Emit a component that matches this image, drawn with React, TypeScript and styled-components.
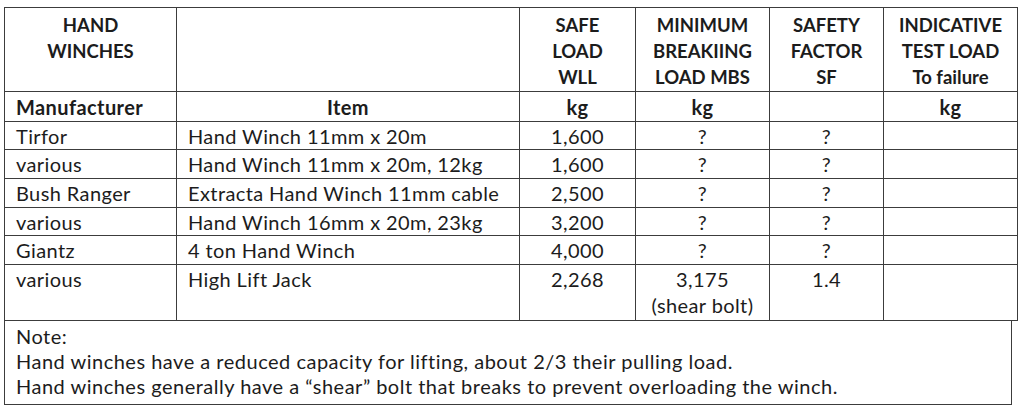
import styled, { createGlobalStyle } from "styled-components";

const GlobalStyle = createGlobalStyle`
  html, body {
    margin: 0;
    padding: 0;
    background: #ffffff;
  }
  body {
    font-family: Lato, "Open Sans", "Liberation Sans", sans-serif;
    color: #1c1c1c;
  }
`;

const Page = styled.div`
  padding: 7px 0 0 4px;
`;

const Table = styled.table`
  border-collapse: collapse;
  table-layout: fixed;
  width: 1013px;
  font-size: 20px;
  letter-spacing: 0.4px;
`;

const HeadRow = styled.tr`
  height: 84px;
`;

const UnitRow = styled.tr`
  height: 30px;
`;

const BodyRow = styled.tr<{ $height: number }>`
  height: ${(p) => p.$height}px;
`;

const HeadCell = styled.th`
  border: 1px solid #3c3c3c;
  vertical-align: top;
  text-align: center;
  font-size: 18.5px;
  letter-spacing: 0;
  font-weight: 700;
  line-height: 26px;
  padding: 4px 4px 0;
`;

const UnitCell = styled.th<{ $align?: "left" | "center" }>`
  border: 1px solid #3c3c3c;
  text-align: ${(p) => p.$align ?? "center"};
  font-weight: 700;
  line-height: 26px;
  padding: 0 11px;
`;

const Cell = styled.td<{ $align?: "left" | "center" }>`
  border: 1px solid #3c3c3c;
  vertical-align: top;
  text-align: ${(p) => p.$align ?? "center"};
  line-height: 26px;
  padding: 1px 11px 0;
  white-space: nowrap;
`;

const NoteBox = styled.div`
  box-sizing: border-box;
  width: 1008px;
  height: 85px;
  margin-top: -1px;
  border: 1px solid #3c3c3c;
  padding: 3px 11px 0;
  font-size: 20px;
  letter-spacing: 0.5px;
  line-height: 25px;
`;

const NoteLine = styled.p`
  margin: 0;
  white-space: nowrap;
`;

interface IWinch {
  maker: string;
  item: string;
  wll: string;
  mbs: string[];
  sf: string;
  height: number;
}

const winches: IWinch[] = [
  { maker: "Tirfor", item: "Hand Winch 11mm x 20m", wll: "1,600", mbs: ["?"], sf: "?", height: 28 },
  { maker: "various", item: "Hand Winch 11mm x 20m, 12kg", wll: "1,600", mbs: ["?"], sf: "?", height: 29 },
  { maker: "Bush Ranger", item: "Extracta Hand Winch 11mm cable", wll: "2,500", mbs: ["?"], sf: "?", height: 29 },
  { maker: "various", item: "Hand Winch 16mm x 20m, 23kg", wll: "3,200", mbs: ["?"], sf: "?", height: 28 },
  { maker: "Giantz", item: "4 ton Hand Winch", wll: "4,000", mbs: ["?"], sf: "?", height: 29 },
  { maker: "various", item: "High Lift Jack", wll: "2,268", mbs: ["3,175", "(shear bolt)"], sf: "1.4", height: 56 },
];

function App() {
  return (
    <>
      <GlobalStyle />
      <Page>
        <Table>
          <colgroup>
            <col style={{ width: 172 }} />
            <col style={{ width: 343 }} />
            <col style={{ width: 116 }} />
            <col style={{ width: 134 }} />
            <col style={{ width: 114 }} />
            <col style={{ width: 134 }} />
          </colgroup>
          <thead>
            <HeadRow>
              <HeadCell>
                HAND
                <br />
                WINCHES
              </HeadCell>
              <HeadCell />
              <HeadCell>
                SAFE
                <br />
                LOAD
                <br />
                WLL
              </HeadCell>
              <HeadCell>
                MINIMUM
                <br />
                BREAKIING
                <br />
                LOAD MBS
              </HeadCell>
              <HeadCell>
                SAFETY
                <br />
                FACTOR
                <br />
                SF
              </HeadCell>
              <HeadCell>
                INDICATIVE
                <br />
                TEST LOAD
                <br />
                To failure
              </HeadCell>
            </HeadRow>
            <UnitRow>
              <UnitCell $align="left">Manufacturer</UnitCell>
              <UnitCell>Item</UnitCell>
              <UnitCell>kg</UnitCell>
              <UnitCell>kg</UnitCell>
              <UnitCell />
              <UnitCell>kg</UnitCell>
            </UnitRow>
          </thead>
          <tbody>
            {winches.map((w, i) => (
              <BodyRow key={i} $height={w.height}>
                <Cell $align="left">{w.maker}</Cell>
                <Cell $align="left">{w.item}</Cell>
                <Cell>{w.wll}</Cell>
                <Cell>
                  {w.mbs.map((m, j) => (
                    <div key={j}>{m}</div>
                  ))}
                </Cell>
                <Cell>{w.sf}</Cell>
                <Cell />
              </BodyRow>
            ))}
          </tbody>
        </Table>
        <NoteBox>
          <NoteLine>Note:</NoteLine>
          <NoteLine>
            Hand winches have a reduced capacity for lifting, about 2/3 their
            pulling load.
          </NoteLine>
          <NoteLine>
            Hand winches generally have a “shear” bolt that breaks to prevent
            overloading the winch.
          </NoteLine>
        </NoteBox>
      </Page>
    </>
  );
}

export default App;
